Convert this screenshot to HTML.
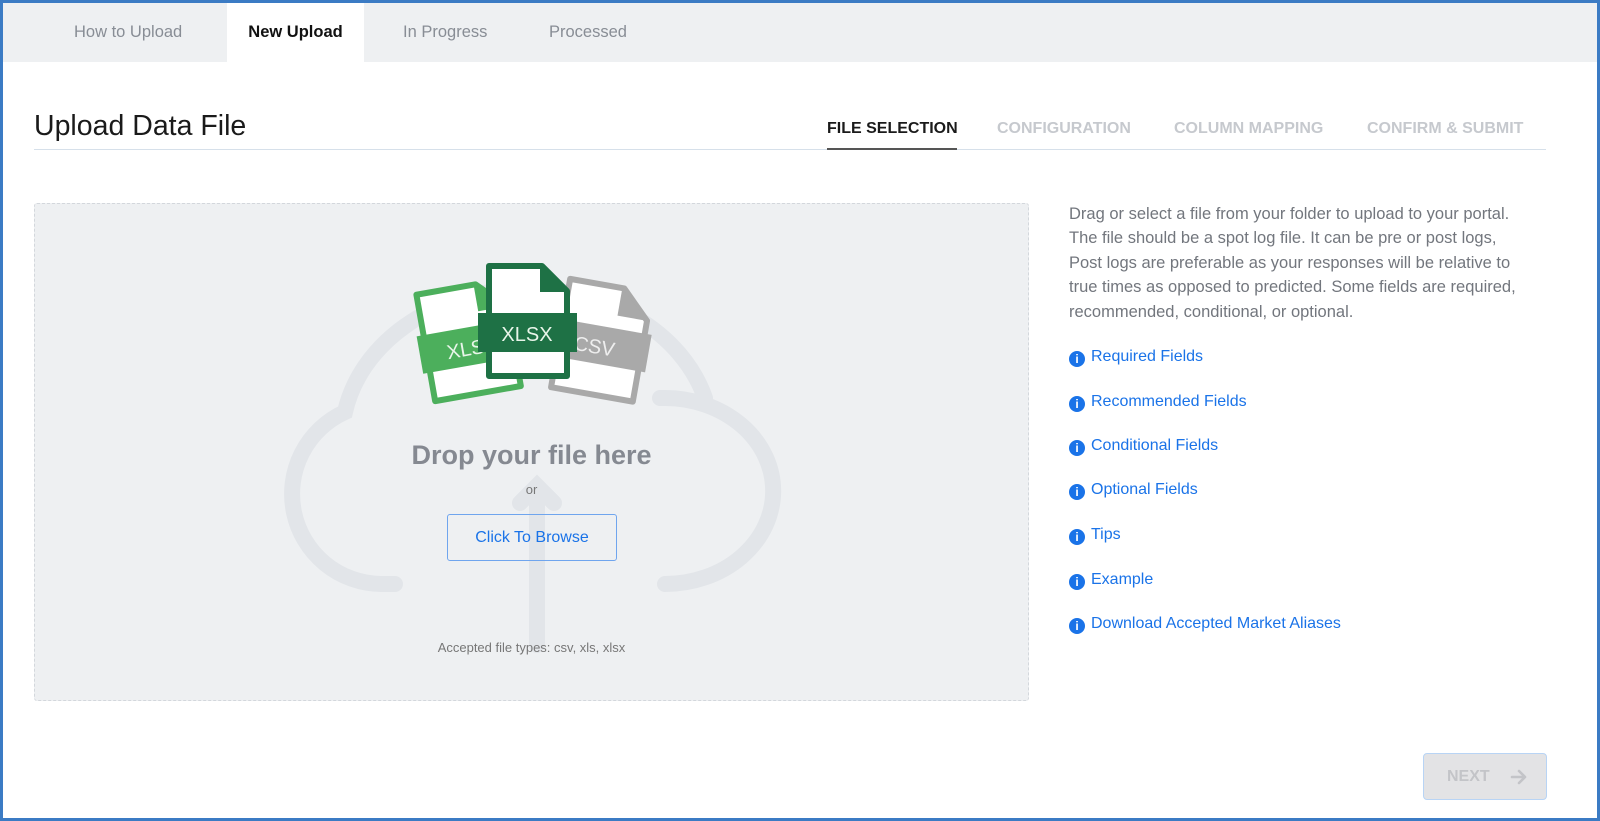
<!DOCTYPE html>
<html><head><meta charset="utf-8"><style>
*{margin:0;padding:0;box-sizing:border-box}
html,body{width:1600px;height:821px;overflow:hidden;background:#fff;font-family:"Liberation Sans",sans-serif}
.frame{position:absolute;left:0;top:0;width:1600px;height:821px;border:3px solid #3b7bc4}
.abs{position:absolute;white-space:nowrap}
.tabbar{position:absolute;left:3px;top:3px;width:1594px;height:59px;background:#eef0f2}
.tab{position:absolute;top:3px;height:59px;line-height:59px;font-size:16.5px;color:#888d95}
.steps{font-size:16px;font-weight:bold;color:#c6c9ce;top:120px}
.desc{position:absolute;left:1069px;top:202px;width:520px;font-size:16.5px;line-height:24.4px;color:#72767d;white-space:nowrap}
.link{position:absolute;left:1069px;font-size:16px;color:#1a73e8;height:20px;line-height:20px}
.link i{display:inline-block;width:16px;height:16px;border-radius:50%;background:#1a73e8;color:#fff;font-style:normal;font-weight:bold;font-size:12px;line-height:16px;text-align:center;vertical-align:-2px;margin-right:6px}
</style></head><body>
<div class="frame"></div>
<div class="tabbar"></div>
<div class="tab" style="left:74px">How to Upload</div>
<div class="tab" style="left:227px;width:137px;background:#fff;color:#111;font-weight:bold;text-align:center;top:3px;height:59px">New Upload</div>
<div class="tab" style="left:403px">In Progress</div>
<div class="tab" style="left:549px">Processed</div>

<div class="abs" style="left:34px;top:110px;font-size:28.5px;color:#1a1a1a">Upload Data File</div>
<div class="abs" style="left:34px;top:149px;width:1512px;height:1px;background:#d6e0ea"></div>
<div class="abs steps" style="left:827px;color:#1a1a1a">FILE SELECTION</div>
<div class="abs" style="left:827px;top:148px;width:130px;height:2px;background:#555"></div>
<div class="abs steps" style="left:997px">CONFIGURATION</div>
<div class="abs steps" style="left:1174px">COLUMN MAPPING</div>
<div class="abs steps" style="left:1367px">CONFIRM &amp; SUBMIT</div>

<div class="abs" style="left:34px;top:203px;width:995px;height:498px;background:#eef0f2;border:1px dashed #d3d7dc;border-radius:3px"></div>
<svg class="abs" style="left:0;top:0" width="1600" height="821">
 <g fill="none" stroke="#e2e5e9" stroke-width="16" stroke-linecap="round">
  <path d="M395 584 H381 A90 90 0 0 1 345 412 A185 150 0 0 1 705 398"/>
  <path d="M660 398 H665 A107 92 0 0 1 665 584"/>
  <path d="M537 645 V492 M520 503 L537 486 L554 503"/>
 </g>
 <g transform="rotate(-10 465 340)">
  <path d="M425 287 H485 L512 314 V395 H425 Z" fill="#fff" stroke="#4caf5c" stroke-width="6" stroke-linejoin="round"/>
  <path d="M483 287 V314 H512" fill="#4caf5c"/>
  <rect x="418" y="328" width="100" height="38" fill="#4caf5c"/>
  <text x="445" y="356" font-size="20" fill="#e8f5e9" font-family="Liberation Sans">XLS</text>
 </g>
 <g transform="rotate(10 600 340)">
  <path d="M560 285 H615 L643 313 V395 H560 Z" fill="#fff" stroke="#a9a9a9" stroke-width="6" stroke-linejoin="round"/>
  <path d="M613 285 V313 H643" fill="#a9a9a9"/>
  <rect x="553" y="326" width="97" height="38" fill="#a9a9a9"/>
  <text x="575" y="354" font-size="20" fill="#eee" font-family="Liberation Sans">CSV</text>
 </g>
 <path d="M489 266 H542 L567 291 V376 H489 Z" fill="#fff" stroke="#1e7145" stroke-width="6" stroke-linejoin="round"/>
 <path d="M540 264 V292 H569 Z" fill="#1e7145"/>
 <rect x="478" y="313" width="99" height="39" fill="#1e7145"/>
 <text x="527" y="341" font-size="20" fill="#e8f5e9" text-anchor="middle" font-family="Liberation Sans">XLSX</text>
</svg>
<div class="abs" style="left:34px;top:440px;width:995px;text-align:center;font-size:27px;font-weight:bold;color:#858991">Drop your file here</div>
<div class="abs" style="left:34px;top:482px;width:995px;text-align:center;font-size:13px;color:#777">or</div>
<div class="abs" style="left:447px;top:514px;width:170px;height:47px;border:1px solid #6fa5ee;border-radius:3px;text-align:center;line-height:45px;font-size:16px;color:#1a73e8">Click To Browse</div>
<div class="abs" style="left:34px;top:640px;width:995px;text-align:center;font-size:13px;color:#777">Accepted file types: csv, xls, xlsx</div>

<div class="desc">Drag or select a file from your folder to upload to your portal.<br>The file should be a spot log file. It can be pre or post logs,<br>Post logs are preferable as your responses will be relative to<br>true times as opposed to predicted. Some fields are required,<br>recommended, conditional, or optional.</div>
<div class="link" style="top:347px"><i>i</i>Required Fields</div>
<div class="link" style="top:392px"><i>i</i>Recommended Fields</div>
<div class="link" style="top:436px"><i>i</i>Conditional Fields</div>
<div class="link" style="top:480px"><i>i</i>Optional Fields</div>
<div class="link" style="top:525px"><i>i</i>Tips</div>
<div class="link" style="top:570px"><i>i</i>Example</div>
<div class="link" style="top:614px"><i>i</i>Download Accepted Market Aliases</div>

<div class="abs" style="left:1423px;top:753px;width:124px;height:47px;background:#e3e3e5;border:1px solid #b8d4f5;border-radius:4px;font-size:16px;font-weight:bold;color:#c3c4c8;line-height:45px;padding-left:23px">NEXT<svg style="position:absolute;left:86px;top:14px" width="18" height="18" viewBox="0 0 18 18"><path d="M2 9 H15 M9 3 L15 9 L9 15" fill="none" stroke="#c3c4c8" stroke-width="2.6" stroke-linecap="round" stroke-linejoin="round"/></svg></div>
</body></html>
